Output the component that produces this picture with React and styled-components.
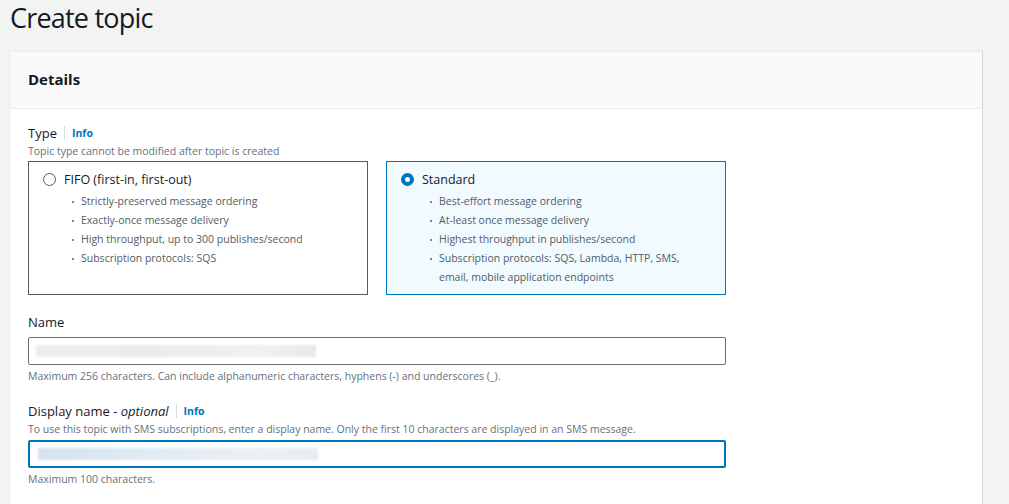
import React from "react";
import styled, { createGlobalStyle } from "styled-components";

const GlobalStyle = createGlobalStyle`
  body {
    margin: 0;
    background: #f2f3f3;
    font-family: "Open Sans", "Noto Sans", sans-serif;
    color: #16191f;
  }
`;

const Page = styled.div`
  padding: 0 27px 0 9px;
  height: 504px;
  overflow: hidden;
`;

const Title = styled.h1`
  margin: 0;
  padding: 0 0 0 1px;
  height: 51px;
  line-height: 36px;
  font-size: 27px;
  font-weight: 400;
  letter-spacing: -0.8px;
`;

const Card = styled.div`
  background: #fff;
  border-top: 1px solid #eaeded;
  border-left: 1px solid #eaeded;
  box-shadow: 1px 0 0 #d5dbdb;
  min-height: 460px;
`;

const CardHeader = styled.div`
  background: #fafafa;
  border-bottom: 1px solid #eaeded;
  height: 57px;
  box-sizing: border-box;
  display: flex;
  align-items: center;
  padding: 0 18px 3px;
`;

const CardTitle = styled.h2`
  margin: 0;
  font-size: 15px;
  font-weight: 700;
`;

const CardBody = styled.div`
  padding: 14px 18px 12px;
  width: 698px;
`;

const Field = styled.div`
  margin-bottom: ${(p) => p.$gap || 0}px;
`;

const LabelRow = styled.div`
  display: flex;
  align-items: center;
  height: 20px;
`;

const Label = styled.span`
  font-size: 13px;
  em {
    font-style: italic;
  }
`;

const InfoLink = styled.a`
  font-size: 10.5px;
  font-weight: 700;
  color: #0073bb;
  margin-left: 7px;
  padding-left: 7px;
  border-left: 1px solid #d5dbdb;
  line-height: 14px;
`;

const Description = styled.div`
  font-size: 10.5px;
  color: #687078;
  line-height: 17px;
`;

const Tiles = styled.div`
  display: grid;
  grid-template-columns: 1fr 1fr;
  gap: 18px;
  margin-top: 1px;
`;

const Tile = styled.div`
  height: 134px;
  box-sizing: border-box;
  border: 1px solid ${(p) => (p.$selected ? "#0073bb" : "#545b64")};
  background: ${(p) => (p.$selected ? "#f1faff" : "#fff")};
  padding: 9px 14px;
`;

const TileHead = styled.div`
  display: flex;
  align-items: center;
  gap: 8px;
  height: 17px;
  font-size: 12.5px;
`;

const Radio = styled.span`
  width: 13px;
  height: 13px;
  box-sizing: border-box;
  border-radius: 50%;
  background: #fff;
  border: ${(p) => (p.$checked ? "4px solid #0073bb" : "1px solid #545b64")};
  flex-shrink: 0;
`;

const Bullets = styled.ul`
  margin: 4px 0 0 0;
  padding: 0 0 0 38px;
  list-style: none;
  font-size: 10.5px;
  color: #545b64;
  line-height: 19px;
  li {
    position: relative;
  }
  li::before {
    content: "";
    position: absolute;
    left: -9px;
    top: 9px;
    width: 2px;
    height: 2px;
    border-radius: 50%;
    background: #545b64;
  }
`;

const Input = styled.div`
  margin-top: ${(p) => (p.$focused ? 2 : 5)}px;
  height: 28px;
  box-sizing: border-box;
  border: ${(p) => (p.$focused ? "2px solid #0073bb" : "1px solid #687078")};
  border-radius: 2px;
  display: flex;
  align-items: center;
  padding: 0 ${(p) => (p.$focused ? 8 : 7)}px;
`;

const Blurred = styled.span`
  width: 280px;
  height: 12px;
  background: ${(p) =>
    p.$tint
      ? "linear-gradient(90deg, #d4e3ef, #e1ebf3 40%, #eaf1f7 80%, #e5edf4)"
      : "linear-gradient(90deg, #eeeeee, #ebebeb 40%, #f1f1f1 80%, #e8e8e8)"};
  filter: blur(1px);
`;

const Hint = styled.div`
  font-size: 10.5px;
  color: #687078;
  line-height: 17px;
  margin-top: 3px;
`;

const fifo = [
  "Strictly-preserved message ordering",
  "Exactly-once message delivery",
  "High throughput, up to 300 publishes/second",
  "Subscription protocols: SQS",
];

const standard = [
  "Best-effort message ordering",
  "At-least once message delivery",
  "Highest throughput in publishes/second",
  "Subscription protocols: SQS, Lambda, HTTP, SMS, email, mobile application endpoints",
];

export default function App() {
  return (
    <>
      <GlobalStyle />
      <Page>
        <Title>Create topic</Title>
        <Card>
          <CardHeader>
            <CardTitle>Details</CardTitle>
          </CardHeader>
          <CardBody>
            <Field $gap={17}>
              <LabelRow>
                <Label>Type</Label>
                <InfoLink>Info</InfoLink>
              </LabelRow>
              <Description>Topic type cannot be modified after topic is created</Description>
              <Tiles>
                <Tile>
                  <TileHead>
                    <Radio />
                    FIFO (first-in, first-out)
                  </TileHead>
                  <Bullets>
                    {fifo.map((t) => (
                      <li key={t}>{t}</li>
                    ))}
                  </Bullets>
                </Tile>
                <Tile $selected>
                  <TileHead>
                    <Radio $checked />
                    Standard
                  </TileHead>
                  <Bullets>
                    {standard.map((t) => (
                      <li key={t}>{t}</li>
                    ))}
                  </Bullets>
                </Tile>
              </Tiles>
            </Field>
            <Field $gap={16}>
              <LabelRow>
                <Label>Name</Label>
              </LabelRow>
              <Input>
                <Blurred />
              </Input>
              <Hint>
                Maximum 256 characters. Can include alphanumeric characters, hyphens (-) and underscores (_).
              </Hint>
            </Field>
            <Field>
              <LabelRow>
                <Label>
                  Display name - <em>optional</em>
                </Label>
                <InfoLink>Info</InfoLink>
              </LabelRow>
              <Description>
                To use this topic with SMS subscriptions, enter a display name. Only the first 10 characters are displayed in an SMS message.
              </Description>
              <Input $focused>
                <Blurred $tint />
              </Input>
              <Hint>Maximum 100 characters.</Hint>
            </Field>
          </CardBody>
        </Card>
      </Page>
    </>
  );
}
